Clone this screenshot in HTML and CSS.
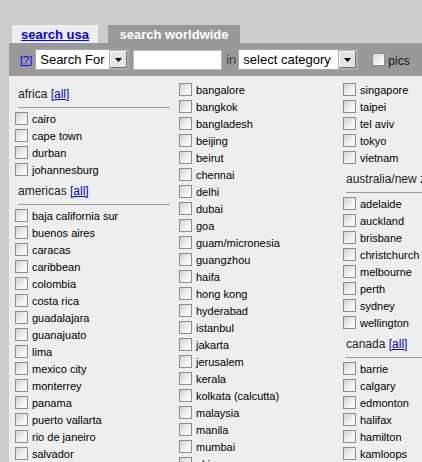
FILE: index.html
```html
<!DOCTYPE html>
<html lang="en">
<head>
    <meta charset="UTF-8">
    <title>craigslist worldwide search</title>
    <link rel="stylesheet" href="styles.css">
</head>
<body>
    <div class="page">
        <div class="tabs">
            <div class="tab tab-usa"><a href="#">search usa</a></div>
            <div class="tab tab-world">search worldwide</div>
        </div>

        <!-- search bar -->
        <form class="searchbar">
            <a class="help" href="#">[?]</a>
            <div class="select select-type">
                <span class="select-value">Search For</span>
                <span class="select-btn"><svg width="7" height="4" viewBox="0 0 7 4"><path d="M0 0h7L3.5 4z" fill="#000"/></svg></span>
            </div>
            <input type="text" class="query">
            <span class="in">in</span>
            <div class="select select-cat">
                <span class="select-value">select category</span>
                <span class="select-btn"><svg width="7" height="4" viewBox="0 0 7 4"><path d="M0 0h7L3.5 4z" fill="#000"/></svg></span>
            </div>
            <label class="pics"><input type="checkbox" class="box"><span>pics</span></label>
            <input type="checkbox" class="box extra">
        </form>

        <!-- regions -->
        <div class="regions">
            <div class="col">
                <h4>africa <a href="#">[all]</a></h4>
                <label class="item"><input type="checkbox" class="box">cairo</label>
                <label class="item"><input type="checkbox" class="box">cape town</label>
                <label class="item"><input type="checkbox" class="box">durban</label>
                <label class="item"><input type="checkbox" class="box">johannesburg</label>
                <h4>americas <a href="#">[all]</a></h4>
                <label class="item"><input type="checkbox" class="box">baja california sur</label>
                <label class="item"><input type="checkbox" class="box">buenos aires</label>
                <label class="item"><input type="checkbox" class="box">caracas</label>
                <label class="item"><input type="checkbox" class="box">caribbean</label>
                <label class="item"><input type="checkbox" class="box">colombia</label>
                <label class="item"><input type="checkbox" class="box">costa rica</label>
                <label class="item"><input type="checkbox" class="box">guadalajara</label>
                <label class="item"><input type="checkbox" class="box">guanajuato</label>
                <label class="item"><input type="checkbox" class="box">lima</label>
                <label class="item"><input type="checkbox" class="box">mexico city</label>
                <label class="item"><input type="checkbox" class="box">monterrey</label>
                <label class="item"><input type="checkbox" class="box">panama</label>
                <label class="item"><input type="checkbox" class="box">puerto vallarta</label>
                <label class="item"><input type="checkbox" class="box">rio de janeiro</label>
                <label class="item"><input type="checkbox" class="box">salvador</label>
            </div>
            <div class="col">
                <label class="item"><input type="checkbox" class="box">bangalore</label>
                <label class="item"><input type="checkbox" class="box">bangkok</label>
                <label class="item"><input type="checkbox" class="box">bangladesh</label>
                <label class="item"><input type="checkbox" class="box">beijing</label>
                <label class="item"><input type="checkbox" class="box">beirut</label>
                <label class="item"><input type="checkbox" class="box">chennai</label>
                <label class="item"><input type="checkbox" class="box">delhi</label>
                <label class="item"><input type="checkbox" class="box">dubai</label>
                <label class="item"><input type="checkbox" class="box">goa</label>
                <label class="item"><input type="checkbox" class="box">guam/micronesia</label>
                <label class="item"><input type="checkbox" class="box">guangzhou</label>
                <label class="item"><input type="checkbox" class="box">haifa</label>
                <label class="item"><input type="checkbox" class="box">hong kong</label>
                <label class="item"><input type="checkbox" class="box">hyderabad</label>
                <label class="item"><input type="checkbox" class="box">istanbul</label>
                <label class="item"><input type="checkbox" class="box">jakarta</label>
                <label class="item"><input type="checkbox" class="box">jerusalem</label>
                <label class="item"><input type="checkbox" class="box">kerala</label>
                <label class="item"><input type="checkbox" class="box">kolkata (calcutta)</label>
                <label class="item"><input type="checkbox" class="box">malaysia</label>
                <label class="item"><input type="checkbox" class="box">manila</label>
                <label class="item"><input type="checkbox" class="box">mumbai</label>
                <label class="item"><input type="checkbox" class="box">okinawa</label>
            </div>
            <div class="col">
                <label class="item"><input type="checkbox" class="box">singapore</label>
                <label class="item"><input type="checkbox" class="box">taipei</label>
                <label class="item"><input type="checkbox" class="box">tel aviv</label>
                <label class="item"><input type="checkbox" class="box">tokyo</label>
                <label class="item"><input type="checkbox" class="box">vietnam</label>
                <h4>australia/new zealand <a href="#">[all]</a></h4>
                <label class="item"><input type="checkbox" class="box">adelaide</label>
                <label class="item"><input type="checkbox" class="box">auckland</label>
                <label class="item"><input type="checkbox" class="box">brisbane</label>
                <label class="item"><input type="checkbox" class="box">christchurch</label>
                <label class="item"><input type="checkbox" class="box">melbourne</label>
                <label class="item"><input type="checkbox" class="box">perth</label>
                <label class="item"><input type="checkbox" class="box">sydney</label>
                <label class="item"><input type="checkbox" class="box">wellington</label>
                <h4>canada <a href="#">[all]</a></h4>
                <label class="item"><input type="checkbox" class="box">barrie</label>
                <label class="item"><input type="checkbox" class="box">calgary</label>
                <label class="item"><input type="checkbox" class="box">edmonton</label>
                <label class="item"><input type="checkbox" class="box">halifax</label>
                <label class="item"><input type="checkbox" class="box">hamilton</label>
                <label class="item"><input type="checkbox" class="box">kamloops</label>
            </div>
        </div>
    </div>
</body>
</html>
```

FILE: styles.css
```css
html, body {
    margin: 0;
    padding: 0;
    height: 100%;
    overflow: hidden;
}
body {
    background-color: #ccc;
    font-family: Arial, "Liberation Sans", sans-serif;
    color: #000;
}
a {
    color: #00f;
}
.page {
    margin-left: 9px;
    padding-top: 25px;
    width: 600px;
}

/* tabs */
.tabs {
    display: flex;
    padding-left: 3px;
    height: 18px;
}
.tab {
    height: 18px;
    line-height: 20px;
    font-size: 13px;
    font-weight: bold;
    text-align: center;
}
.tab-usa {
    width: 86px;
    background-color: #eee;
}
.tab-world {
    width: 132px;
    margin-left: 10px;
    background-color: #999;
    color: #fff;
}

/* search bar */
.searchbar {
    display: flex;
    align-items: center;
    height: 33px;
    margin: 0;
    padding-left: 11px;
    background-color: #999;
}
.help {
    font-size: 11px;
}
.select {
    display: flex;
    align-items: center;
    height: 21px;
    box-sizing: border-box;
    background: #fff;
    border: 1px solid #aaa;
    font-size: 13px;
}
.select-type {
    width: 94px;
    margin-left: 3px;
}
.select-cat {
    width: 120px;
    margin-left: 2px;
}
.select-value {
    flex: 1;
    padding-left: 4px;
    white-space: nowrap;
}
.select-btn {
    display: flex;
    align-items: center;
    justify-content: center;
    width: 15px;
    height: 15px;
    margin-right: 1px;
    background: #e4e4e4;
    border: 1px solid;
    border-color: #fff #707070 #707070 #fff;
    box-shadow: 0 0 0 1px #b0b0b0;
}
.query {
    width: 89px;
    height: 20px;
    box-sizing: border-box;
    margin: 0 0 0 4px;
    border: 1px solid #bbb;
    background: #fff;
}
.in {
    margin-left: 4px;
    font-size: 13px;
    color: #444;
}
.pics {
    display: flex;
    align-items: center;
    margin-left: 14px;
    font-size: 12px;
    color: #112;
}
.pics span {
    margin-left: 3px;
    padding-top: 3px;
}
.extra {
    margin-left: 12px !important;
}

/* checkbox look */
.box {
    appearance: none;
    -webkit-appearance: none;
    flex-shrink: 0;
    width: 13px;
    height: 13px;
    margin: 0;
    border: 1px solid #8c8c8c;
    background: linear-gradient(135deg, #d2d2d2, #f2f2f2 60%, #fff);
}

/* region columns */
.regions {
    display: flex;
    padding: 5px 0 0 6px;
    background-color: #eee;
    height: 500px;
}
.col {
    width: 164px;
    flex-shrink: 0;
}
.col h4 {
    margin: 0 9px 2px 3px;
    padding: 5px 0 4px;
    font-size: 12px;
    line-height: 17px;
    font-weight: normal;
    color: #222;
    border-bottom: 1px solid #999;
    white-space: nowrap;
}
.item {
    display: flex;
    align-items: center;
    height: 17px;
    font-size: 11px;
    white-space: nowrap;
}
.item .box {
    margin-right: 4px;
}
```
